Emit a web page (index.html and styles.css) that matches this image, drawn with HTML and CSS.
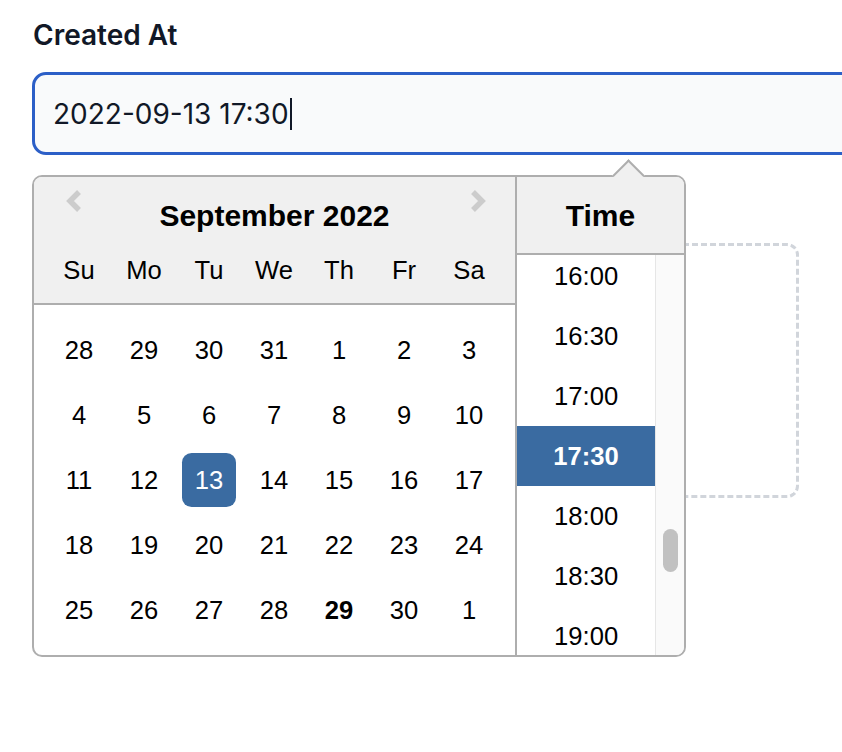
FILE: index.html
```html
<!DOCTYPE html>
<html lang="en">
<head>
<meta charset="utf-8">
<title>Created At</title>
<link rel="stylesheet" href="styles.css">
</head>
<body>
<div class="page">
  <label class="label">Created At</label>
  <div class="field">
    <div class="input-wrap">
      <div class="input"><span class="value">2022-09-13 17:30</span><span class="caret"></span></div>
    </div>
    <div class="popup">
      <div class="arrow"></div>
      <div class="datepicker">
        <div class="calendar">
          <div class="cal-header">
            <span class="nav prev"><svg width="20" height="24" viewBox="0 0 20 24"><polyline points="14,3 5,12 14,21" fill="none" stroke="#cccccc" stroke-width="5.5"/></svg></span>
            <span class="nav next"><svg width="20" height="24" viewBox="0 0 20 24"><polyline points="6,3 15,12 6,21" fill="none" stroke="#cccccc" stroke-width="5.5"/></svg></span>
            <div class="month-title">September 2022</div>
            <div class="day-names">
              <span>Su</span><span>Mo</span><span>Tu</span><span>We</span><span>Th</span><span>Fr</span><span>Sa</span>
            </div>
          </div>
          <div class="month">
            <div class="week">
              <div class="cell"><span class="day">28</span></div>
              <div class="cell"><span class="day">29</span></div>
              <div class="cell"><span class="day">30</span></div>
              <div class="cell"><span class="day">31</span></div>
              <div class="cell"><span class="day">1</span></div>
              <div class="cell"><span class="day">2</span></div>
              <div class="cell"><span class="day">3</span></div>
            </div>
            <div class="week">
              <div class="cell"><span class="day">4</span></div>
              <div class="cell"><span class="day">5</span></div>
              <div class="cell"><span class="day">6</span></div>
              <div class="cell"><span class="day">7</span></div>
              <div class="cell"><span class="day">8</span></div>
              <div class="cell"><span class="day">9</span></div>
              <div class="cell"><span class="day">10</span></div>
            </div>
            <div class="week">
              <div class="cell"><span class="day">11</span></div>
              <div class="cell"><span class="day">12</span></div>
              <div class="cell"><span class="day selected">13</span></div>
              <div class="cell"><span class="day">14</span></div>
              <div class="cell"><span class="day">15</span></div>
              <div class="cell"><span class="day">16</span></div>
              <div class="cell"><span class="day">17</span></div>
            </div>
            <div class="week">
              <div class="cell"><span class="day">18</span></div>
              <div class="cell"><span class="day">19</span></div>
              <div class="cell"><span class="day">20</span></div>
              <div class="cell"><span class="day">21</span></div>
              <div class="cell"><span class="day">22</span></div>
              <div class="cell"><span class="day">23</span></div>
              <div class="cell"><span class="day">24</span></div>
            </div>
            <div class="week">
              <div class="cell"><span class="day">25</span></div>
              <div class="cell"><span class="day">26</span></div>
              <div class="cell"><span class="day">27</span></div>
              <div class="cell"><span class="day">28</span></div>
              <div class="cell"><span class="day today">29</span></div>
              <div class="cell"><span class="day">30</span></div>
              <div class="cell"><span class="day">1</span></div>
            </div>
          </div>
        </div>
        <div class="time">
          <div class="time-header">Time</div>
          <div class="time-body">
            <ul class="time-list">
              <li>16:00</li>
              <li>16:30</li>
              <li>17:00</li>
              <li class="selected">17:30</li>
              <li>18:00</li>
              <li>18:30</li>
              <li>19:00</li>
            </ul>
            <div class="scrollbar"><div class="thumb"></div></div>
          </div>
        </div>
      </div>
    </div>
  </div>
  <div class="dropzone"></div>
</div>
</body>
</html>
```

FILE: styles.css
```css
html {
  overflow: hidden;
}

body {
  margin: 0;
  padding: 0;
  min-height: 752px;
  background: #ffffff;
  font-family: Inter, "Noto Sans", sans-serif;
}

.page {
  box-sizing: border-box;
  min-height: 752px;
  padding: 17px 0 0 32px;
  width: 842px;
}

.label {
  display: block;
  margin: 0 0 19px 1px;
  font-size: 28px;
  line-height: 36px;
  font-weight: 600;
  color: #111827;
}

.field {
  position: relative;
  width: 810px;
}

.input-wrap {
  width: 810px;
  overflow: hidden;
}

.input {
  box-sizing: border-box;
  width: 880px;
  height: 83px;
  display: flex;
  align-items: center;
  padding: 0 18px;
  border: 3.5px solid #2c5fc7;
  border-radius: 14px;
  background: #f9fafb;
  font-size: 28px;
  color: #111827;
}

.caret {
  display: inline-block;
  width: 2px;
  height: 32px;
  margin-left: 1px;
  background: #111827;
}

/* popup */
.popup {
  position: absolute;
  left: 0;
  top: 103px;
  z-index: 2;
}

.arrow {
  position: absolute;
  left: 585px;
  top: -11px;
  width: 23px;
  height: 23px;
  box-sizing: border-box;
  background: #f0f0f0;
  border-top: 2px solid #aeaeae;
  border-left: 2px solid #aeaeae;
  transform: rotate(45deg);
  z-index: 3;
}

.datepicker {
  display: flex;
  border: 2px solid #aeaeae;
  border-radius: 10px;
  background: #ffffff;
  overflow: hidden;
  font-family: "Liberation Sans", Arial, sans-serif;
  color: #000000;
}

.calendar {
  width: 481px;
}

.cal-header {
  position: relative;
  background: #f0f0f0;
  border-bottom: 2px solid #aeaeae;
  padding-top: 16px;
  text-align: center;
}

.nav {
  position: absolute;
  top: 12px;
  width: 20px;
  height: 24px;
}

.nav svg {
  display: block;
}

.prev {
  left: 31px;
}

.next {
  left: 433px;
}

.month-title {
  font-size: 30px;
  font-weight: 700;
  line-height: 45px;
}

.day-names {
  display: flex;
  align-items: center;
  height: 65px;
  padding: 0 12.5px;
}

.day-names span {
  width: 65px;
  text-align: center;
  font-size: 25.6px;
}

.month {
  padding: 12.5px;
}

.week {
  display: flex;
  height: 65px;
}

.cell {
  width: 65px;
  height: 65px;
  display: flex;
  align-items: center;
  justify-content: center;
}

.day {
  width: 54px;
  height: 54px;
  line-height: 54px;
  text-align: center;
  font-size: 25.6px;
  border-radius: 9.6px;
}

.day.selected {
  background: #3a6ba1;
  color: #ffffff;
}

.day.today {
  font-weight: 700;
}

/* time column */
.time {
  width: 169px;
  box-sizing: border-box;
  border-left: 2px solid #aeaeae;
  display: flex;
  flex-direction: column;
}

.time-header {
  height: 76px;
  line-height: 78px;
  background: #f0f0f0;
  border-bottom: 2px solid #aeaeae;
  text-align: center;
  font-size: 30px;
  font-weight: 700;
}

.time-body {
  display: flex;
  height: 400px;
  overflow: hidden;
}

.time-list {
  width: 139px;
  margin: -9px 0 0 0;
  padding: 0;
  list-style: none;
}

.time-list li {
  height: 60px;
  line-height: 60px;
  text-align: center;
  font-size: 25.6px;
}

.time-list li.selected {
  background: #3a6ba1;
  color: #ffffff;
  font-weight: 700;
}

.scrollbar {
  width: 28px;
  border-left: 1px solid #e6e6e6;
  background: #fafafa;
}

.thumb {
  width: 15px;
  height: 43px;
  margin: 274px 0 0 7px;
  border-radius: 8px;
  background: #c1c1c1;
}

/* dropzone below */
.dropzone {
  box-sizing: border-box;
  width: 767px;
  height: 255px;
  margin-top: 88px;
  border: 3px dashed #d1d5db;
  border-radius: 12px;
}
```
